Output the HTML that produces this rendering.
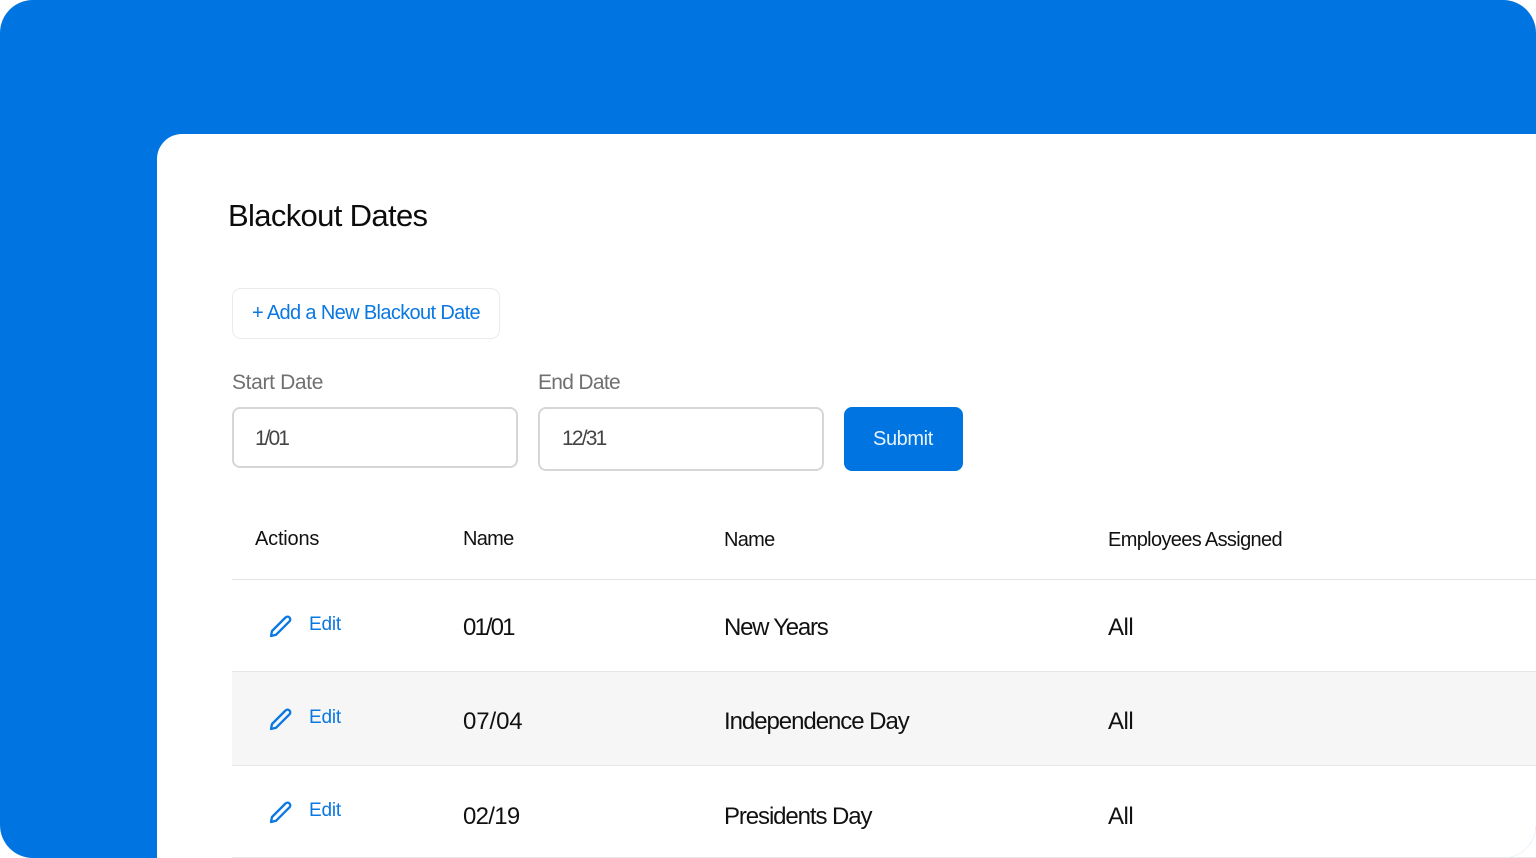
<!DOCTYPE html>
<html><head><meta charset="utf-8"><style>
html,body{margin:0;padding:0;background:#fff}
#p{position:relative;width:1536px;height:858px;overflow:hidden;background:#fff;font-family:"Liberation Sans",sans-serif;color:#111}
#o{position:absolute;inset:0;background:#0074e0;border-radius:33px}
#c{position:absolute;left:157px;top:134px;width:1379px;height:724px;background:#fff;border-radius:25px 0 33px 0}
.t{position:absolute;white-space:nowrap;line-height:1}
.b{position:absolute;box-sizing:border-box;background:#fff}
.r{position:absolute;left:232px;width:1304px}
.l{color:#0a78e2}
svg{position:absolute}
</style></head><body><div id="p">
<div id="o"></div><div id="c"></div>
<div class="t" style="left:228px;top:200px;font-size:31px;letter-spacing:-.65px;color:#0c0c0c">Blackout Dates</div>
<div class="b" style="left:232px;top:288px;width:268px;height:51px;border:1.5px solid #ebebeb;border-radius:9px"></div>
<div class="t l" style="left:252px;top:303px;font-size:20px;letter-spacing:-.64px">+ Add a New Blackout Date</div>
<div class="t" style="left:232px;top:372px;font-size:21px;letter-spacing:-.35px;color:#707070">Start Date</div>
<div class="t" style="left:538px;top:372px;font-size:21px;letter-spacing:-.7px;color:#707070">End Date</div>
<div class="b" style="left:232px;top:407px;width:286px;height:61px;border:2px solid #d6d6d6;border-radius:8px"></div>
<div class="b" style="left:538px;top:407px;width:286px;height:64px;border:2px solid #d6d6d6;border-radius:8px"></div>
<div class="t" style="left:255px;top:428px;font-size:21px;letter-spacing:-2px;color:#444">1/01</div>
<div class="t" style="left:562px;top:428px;font-size:21px;letter-spacing:-1.8px;color:#444">12/31</div>
<div class="b" style="left:844px;top:407px;width:119px;height:64px;background:#0074e0;border-radius:8px"></div>
<div class="t" style="left:873px;top:429px;font-size:20px;letter-spacing:-.4px;color:#e8f3ff">Submit</div>

<div class="t" style="left:255px;top:529px;font-size:20px;letter-spacing:-.2px">Actions</div>
<div class="t" style="left:463px;top:529px;font-size:20px;letter-spacing:-.7px">Name</div>
<div class="t" style="left:724px;top:530px;font-size:20px;letter-spacing:-.7px">Name</div>
<div class="t" style="left:1108px;top:530px;font-size:20px;letter-spacing:-.65px">Employees Assigned</div>

<div class="r" style="top:579px;height:1px;background:#e4e4e4"></div>
<div class="r" style="top:671px;height:95px;background:#f6f6f6;border-top:1px solid #e6e6e6;border-bottom:1px solid #e6e6e6;box-sizing:border-box"></div>
<div class="r" style="top:857px;height:1px;background:#e8e8e8"></div>

<svg style="left:268px;top:614px" width="24" height="24" viewBox="0 0 24 24" fill="none" stroke="#0a78e2" stroke-width="2.300" stroke-linejoin="round"><path d="M3 22l1-5L17.500 3.500a2.600 2.600 0 0 1 4 3.800L8 20.800z"/></svg>
<svg style="left:268px;top:707px" width="24" height="24" viewBox="0 0 24 24" fill="none" stroke="#0a78e2" stroke-width="2.300" stroke-linejoin="round"><path d="M3 22l1-5L17.500 3.500a2.600 2.600 0 0 1 4 3.800L8 20.800z"/></svg>
<svg style="left:268px;top:800px" width="24" height="24" viewBox="0 0 24 24" fill="none" stroke="#0a78e2" stroke-width="2.300" stroke-linejoin="round"><path d="M3 22l1-5L17.500 3.500a2.600 2.600 0 0 1 4 3.800L8 20.800z"/></svg>

<div class="t l" style="left:309px;top:615px;font-size:19px;letter-spacing:-.2px">Edit</div>
<div class="t l" style="left:309px;top:708px;font-size:19px;letter-spacing:-.2px">Edit</div>
<div class="t l" style="left:309px;top:801px;font-size:19px;letter-spacing:-.2px">Edit</div>

<div class="t" style="left:463px;top:616px;font-size:24px;letter-spacing:-1.9px">01/01</div>
<div class="t" style="left:463px;top:710px;font-size:24px;letter-spacing:-.1px">07/04</div>
<div class="t" style="left:463px;top:805px;font-size:24px;letter-spacing:-.7px">02/19</div>
<div class="t" style="left:724px;top:616px;font-size:24px;letter-spacing:-1.25px">New Years</div>
<div class="t" style="left:724px;top:710px;font-size:24px;letter-spacing:-1.05px">Independence Day</div>
<div class="t" style="left:724px;top:805px;font-size:24px;letter-spacing:-1.1px">Presidents Day</div>
<div class="t" style="left:1108px;top:616px;font-size:24px;letter-spacing:-.5px">All</div>
<div class="t" style="left:1108px;top:710px;font-size:24px;letter-spacing:-.5px">All</div>
<div class="t" style="left:1108px;top:805px;font-size:24px;letter-spacing:-.5px">All</div>
</div></body></html>
